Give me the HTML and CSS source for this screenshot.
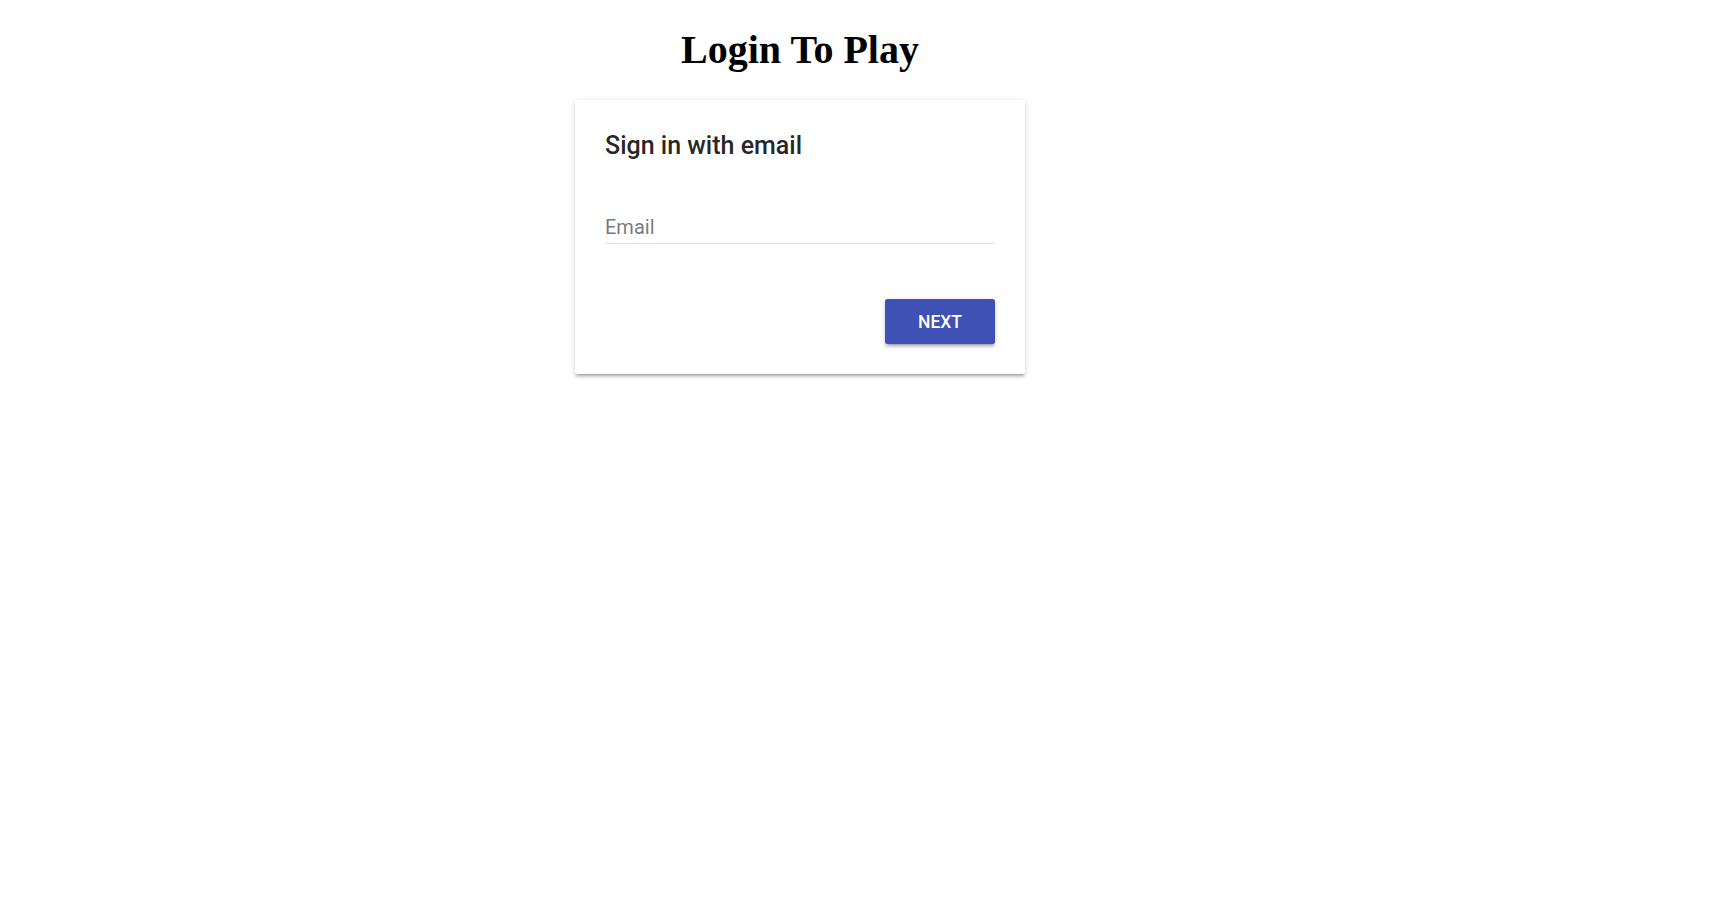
FILE: index.html
```html
<!DOCTYPE html>
<html lang="en">
  <head>
    <meta charset="UTF-8" />
    <title>Login To Play</title>
    <link rel="stylesheet" href="styles.css">
  </head>
  <body>
    <div class="page">
      <h1>Login To Play</h1>

      <div class="card">
        <div class="card-header">
          <h2 class="title">Sign in with email</h2>
        </div>
        <div class="card-content">
          <div class="textfield">
            <input type="email" id="email" class="textfield-input" placeholder="Email" />
          </div>
        </div>
        <div class="card-actions">
          <button class="button">Next</button>
        </div>
      </div>
    </div>
  </body>
</html>
```

FILE: styles.css
```css
html {
  min-height: 100%;
}
body {
  margin: 10px;
  font-family: "Liberation Serif", "Times New Roman", serif;
  background: #fff;
}
.page {
  width: 1580px;
  text-align: center;
  padding-bottom: 40px;
}
h1 {
  font-size: 40px;
  font-weight: bold;
  margin: 16px 0 27px;
  color: #000;
}
.card {
  width: 450px;
  margin: 0 auto;
  text-align: left;
  background: #fff;
  border-radius: 2.5px;
  box-shadow: 0 2.5px 2.5px 0 rgba(0, 0, 0, 0.14),
    0 3.75px 1.25px -2.5px rgba(0, 0, 0, 0.2),
    0 1.25px 6.25px 0 rgba(0, 0, 0, 0.12);
  font-family: Roboto, "Liberation Sans", Arial, sans-serif;
}
.card-header {
  padding: 31px 30px 0 30px;
}
.title {
  margin: 0 0 20px;
  font-size: 25px;
  line-height: 30px;
  font-weight: 500;
  color: rgba(0, 0, 0, 0.87);
}
.card-content {
  padding: 0 30px;
}
.textfield {
  padding-top: 28px;
}
.textfield-input {
  display: block;
  width: 100%;
  box-sizing: border-box;
  border: none;
  border-bottom: 1px solid rgba(0, 0, 0, 0.12);
  padding: 5px 0 4px;
  margin: 0;
  font-family: Roboto, "Liberation Sans", Arial, sans-serif;
  font-size: 20px;
  line-height: 25px;
  height: 35px;
  color: rgba(0, 0, 0, 0.87);
  outline: none;
  background: transparent;
}
.textfield-input::placeholder {
  color: rgba(0, 0, 0, 0.54);
}
.card-actions {
  display: flex;
  justify-content: flex-end;
  padding: 55px 30px 30px;
}
.button {
  width: 110px;
  height: 45px;
  border: none;
  border-radius: 2.5px;
  background: #3f51b5;
  color: #fff;
  font-family: Roboto, "Liberation Sans", Arial, sans-serif;
  font-size: 17.5px;
  font-weight: 500;
  text-transform: uppercase;
  cursor: pointer;
  box-shadow: 0 2.5px 2.5px 0 rgba(0, 0, 0, 0.14),
    0 3.75px 1.25px -2.5px rgba(0, 0, 0, 0.2),
    0 1.25px 6.25px 0 rgba(0, 0, 0, 0.12);
}
```
